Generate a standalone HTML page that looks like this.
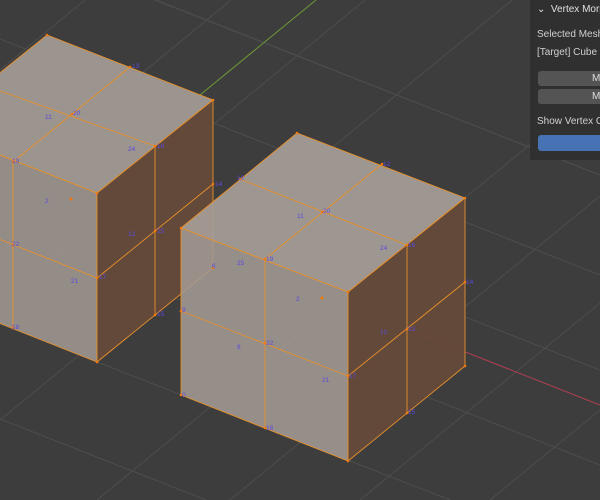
<!DOCTYPE html>
<html><head><style>
html,body{margin:0;padding:0;background:#3d3d3d;width:600px;height:500px;overflow:hidden;font-family:"Liberation Sans","DejaVu Sans",sans-serif}
.wrap{position:relative;width:600px;height:500px;overflow:hidden}
svg{position:absolute;left:0;top:0;display:block;overflow:hidden}
.p{position:absolute;left:530px;top:0;width:70px;height:160px;background:#303030;overflow:hidden;white-space:nowrap;font-size:10px;color:#d0d0d0}
.p div{position:absolute}
.b{left:8px;width:62px;height:15px;background:#545454;border-radius:3px 0 0 3px;color:#ddd;font-size:10px;line-height:15px;text-indent:54px;overflow:hidden}
</style></head><body><div class="wrap">
<svg width="600" height="500" viewBox="0 0 600 500" font-family="Liberation Sans, sans-serif" font-size="6.5" fill="#5a4ae0">
<g stroke="#4d4d4d" stroke-width="1" fill="none">
<line x1="0" y1="-61" x2="600" y2="175"/>
<line x1="0" y1="39" x2="600" y2="275"/>
<line x1="0" y1="134" x2="600" y2="370"/>
<line x1="0" y1="229" x2="600" y2="465"/>
<line x1="0" y1="324" x2="450" y2="500"/>
<line x1="0" y1="419" x2="206" y2="500"/>
<line x1="156" y1="0" x2="600" y2="175"/>
<line x1="0" y1="70" x2="85" y2="0"/>
<line x1="0" y1="190" x2="231" y2="0"/>
<line x1="0" y1="300" x2="365" y2="0"/>
<line x1="0" y1="420" x2="512" y2="0"/>
<line x1="97" y1="500" x2="600" y2="87"/>
<line x1="230" y1="500" x2="600" y2="196"/>
<line x1="360" y1="500" x2="600" y2="303"/>
<line x1="490" y1="500" x2="600" y2="410"/>
</g>
<line x1="200" y1="95" x2="316" y2="0" stroke="#6e9a35" stroke-width="1"/>
<line x1="407" y1="329" x2="600" y2="405" stroke="#b04050" stroke-width="1"/>
<g stroke="#e8902a" stroke-width="0.9">
<polygon points="-69,128 47,35 213,100 97,193" fill="#a69d97" fill-opacity="0.9"/>
<polygon points="-69,128 97,193 97,362 -69,296" fill="#a39a94" fill-opacity="0.85"/>
<polygon points="97,193 213,100 213,268 97,362" fill="#654a39" fill-opacity="0.92"/>
<line x1="-28" y1="81" x2="155" y2="146"/>
<line x1="130" y1="67" x2="13" y2="162"/>
<line x1="13" y1="162" x2="13" y2="328"/>
<line x1="-69" y1="212" x2="97" y2="278"/>
<line x1="97" y1="278" x2="213" y2="184"/>
<line x1="155" y1="146" x2="155" y2="315"/>
<polygon points="181,228 297,133 465,198 348,292" fill="#a69d97" fill-opacity="0.93"/>
<polygon points="181,228 348,292 348,461 181,395" fill="#a39a94" fill-opacity="0.88"/>
<polygon points="348,292 465,198 465,366 348,461" fill="#654a39" fill-opacity="0.93"/>
<line x1="240" y1="179" x2="407" y2="245"/>
<line x1="382" y1="164" x2="265" y2="259"/>
<line x1="265" y1="259" x2="265" y2="428"/>
<line x1="181" y1="311" x2="348" y2="376"/>
<line x1="348" y1="376" x2="465" y2="282"/>
<line x1="407" y1="245" x2="407" y2="413"/>
</g>
<g fill="#f07a10">
<circle cx="47" cy="35" r="1.3"/><circle cx="213" cy="100" r="1.3"/><circle cx="97" cy="193" r="1.3"/><circle cx="97" cy="362" r="1.3"/><circle cx="213" cy="268" r="1.3"/><circle cx="72" cy="114" r="1.3"/><circle cx="130" cy="67" r="1.3"/><circle cx="155" cy="146" r="1.3"/><circle cx="13" cy="162" r="1.3"/><circle cx="97" cy="278" r="1.3"/><circle cx="13" cy="328" r="1.3"/><circle cx="155" cy="315" r="1.3"/><circle cx="155" cy="231" r="1.3"/><circle cx="13" cy="245" r="1.3"/><circle cx="213" cy="184" r="1.3"/><circle cx="71" cy="199" r="1.5"/>
<circle cx="297" cy="133" r="1.3"/><circle cx="465" cy="198" r="1.3"/><circle cx="181" cy="228" r="1.3"/><circle cx="348" cy="292" r="1.3"/><circle cx="348" cy="461" r="1.3"/><circle cx="181" cy="395" r="1.3"/><circle cx="465" cy="366" r="1.3"/><circle cx="322" cy="212" r="1.3"/><circle cx="240" cy="179" r="1.3"/><circle cx="382" cy="164" r="1.3"/><circle cx="265" cy="259" r="1.3"/><circle cx="407" cy="245" r="1.3"/><circle cx="265" cy="428" r="1.3"/><circle cx="181" cy="311" r="1.3"/><circle cx="348" cy="376" r="1.3"/><circle cx="465" cy="282" r="1.3"/><circle cx="407" cy="413" r="1.3"/><circle cx="265" cy="343" r="1.3"/><circle cx="407" cy="329" r="1.3"/><circle cx="322" cy="298" r="1.5"/>
</g>
<text x="45" y="119">11</text><text x="73" y="115">20</text><text x="132" y="68">13</text><text x="128" y="151">24</text><text x="157" y="148">16</text><text x="12" y="163">19</text><text x="45" y="203">2</text><text x="12" y="246">22</text><text x="71" y="283">21</text><text x="99" y="279">17</text><text x="128" y="236">12</text><text x="157" y="233">15</text><text x="12" y="329">18</text><text x="215" y="186">14</text><text x="157" y="316">15</text>
<text x="237" y="180">10</text><text x="297" y="218">11</text><text x="323" y="213">20</text><text x="383" y="166">12</text><text x="380" y="250">24</text><text x="408" y="247">16</text><text x="212" y="268">6</text><text x="237" y="265">25</text><text x="266" y="261">19</text><text x="296" y="301">2</text><text x="237" y="349">8</text><text x="266" y="345">22</text><text x="322" y="382">21</text><text x="349" y="378">17</text><text x="380" y="334">12</text><text x="408" y="331">13</text><text x="266" y="430">18</text><text x="182" y="312">9</text><text x="182" y="397">0</text><text x="408" y="414">15</text><text x="466" y="284">14</text>
</svg>
<div class="p">
<div style="left:7px;top:4px;font-size:10px;color:#e0e0e0">&#8964;&nbsp; Vertex Morph</div>
<div style="left:7px;top:29px">Selected Mesh</div>
<div style="left:7px;top:47px">[Target] Cube</div>
<div class="b" style="top:71px">M</div>
<div class="b" style="top:89px">M</div>
<div style="left:7px;top:116px">Show Vertex C</div>
<div style="position:absolute;left:8px;top:135px;width:62px;height:16px;background:#4772b3;border-radius:3px 0 0 3px"></div>
</div>
</div></body></html>
